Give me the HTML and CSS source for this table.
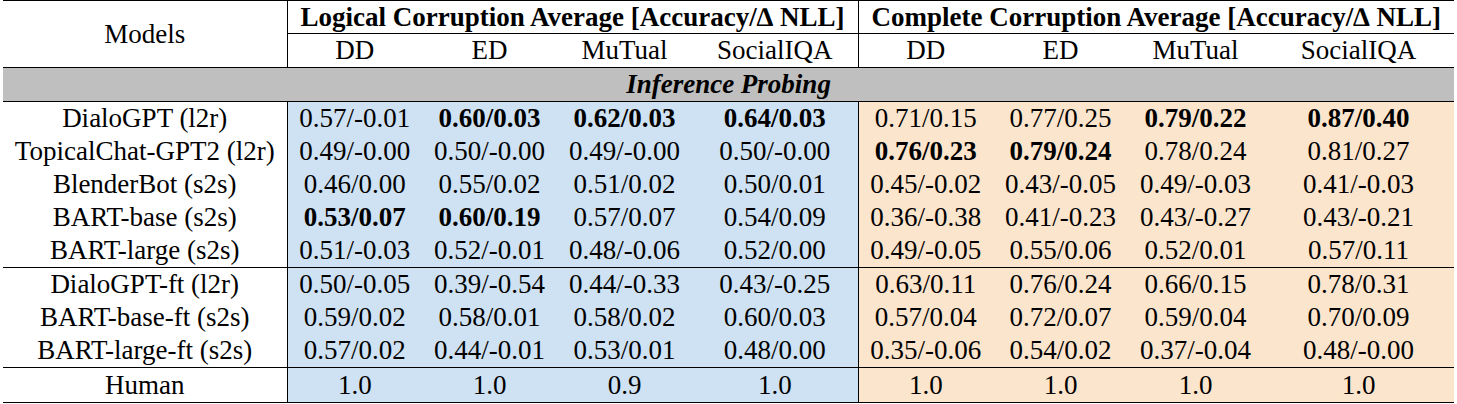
FILE: index.html
```html
<!DOCTYPE html>
<html>
<head>
<meta charset="utf-8">
<link rel="stylesheet" href="styles.css">
</head>
<body>
<table class="results">
  <colgroup>
    <col class="c-model">
    <col class="c-num"><col class="c-num"><col class="c-num"><col class="c-last-l">
    <col class="c-num"><col class="c-num"><col class="c-num"><col class="c-last-c">
  </colgroup>
  <thead>
    <tr class="hrow1">
      <th rowspan="2" class="model-head">Models</th>
      <th colspan="4" class="group sep">Logical Corruption Average [Accuracy/&#8710; NLL]</th>
      <th colspan="4" class="group">Complete Corruption Average [Accuracy/&#8710; NLL]</th>
    </tr>
    <tr class="hrow2">
      <th class="sub">DD</th><th class="sub">ED</th><th class="sub">MuTual</th><th class="sub sep">SocialIQA</th>
      <th class="sub">DD</th><th class="sub">ED</th><th class="sub">MuTual</th><th class="sub">SocialIQA</th>
    </tr>
  </thead>
  <tbody>
    <tr class="band"><td colspan="9">Inference Probing</td></tr>

    <tr class="row">
      <td class="model">DialoGPT (l2r)</td>
      <td class="l">0.57/-0.01</td><td class="l b">0.60/0.03</td><td class="l b">0.62/0.03</td><td class="l sep b">0.64/0.03</td>
      <td class="c">0.71/0.15</td><td class="c">0.77/0.25</td><td class="c b">0.79/0.22</td><td class="c b">0.87/0.40</td>
    </tr>
    <tr class="row">
      <td class="model">TopicalChat-GPT2 (l2r)</td>
      <td class="l">0.49/-0.00</td><td class="l">0.50/-0.00</td><td class="l">0.49/-0.00</td><td class="l sep">0.50/-0.00</td>
      <td class="c b">0.76/0.23</td><td class="c b">0.79/0.24</td><td class="c">0.78/0.24</td><td class="c">0.81/0.27</td>
    </tr>
    <tr class="row">
      <td class="model">BlenderBot (s2s)</td>
      <td class="l">0.46/0.00</td><td class="l">0.55/0.02</td><td class="l">0.51/0.02</td><td class="l sep">0.50/0.01</td>
      <td class="c">0.45/-0.02</td><td class="c">0.43/-0.05</td><td class="c">0.49/-0.03</td><td class="c">0.41/-0.03</td>
    </tr>
    <tr class="row">
      <td class="model">BART-base (s2s)</td>
      <td class="l b">0.53/0.07</td><td class="l b">0.60/0.19</td><td class="l">0.57/0.07</td><td class="l sep">0.54/0.09</td>
      <td class="c">0.36/-0.38</td><td class="c">0.41/-0.23</td><td class="c">0.43/-0.27</td><td class="c">0.43/-0.21</td>
    </tr>
    <tr class="row last">
      <td class="model">BART-large (s2s)</td>
      <td class="l">0.51/-0.03</td><td class="l">0.52/-0.01</td><td class="l">0.48/-0.06</td><td class="l sep">0.52/0.00</td>
      <td class="c">0.49/-0.05</td><td class="c">0.55/0.06</td><td class="c">0.52/0.01</td><td class="c">0.57/0.11</td>
    </tr>

    <tr class="row">
      <td class="model">DialoGPT-ft (l2r)</td>
      <td class="l">0.50/-0.05</td><td class="l">0.39/-0.54</td><td class="l">0.44/-0.33</td><td class="l sep">0.43/-0.25</td>
      <td class="c">0.63/0.11</td><td class="c">0.76/0.24</td><td class="c">0.66/0.15</td><td class="c">0.78/0.31</td>
    </tr>
    <tr class="row">
      <td class="model">BART-base-ft (s2s)</td>
      <td class="l">0.59/0.02</td><td class="l">0.58/0.01</td><td class="l">0.58/0.02</td><td class="l sep">0.60/0.03</td>
      <td class="c">0.57/0.04</td><td class="c">0.72/0.07</td><td class="c">0.59/0.04</td><td class="c">0.70/0.09</td>
    </tr>
    <tr class="row last">
      <td class="model">BART-large-ft (s2s)</td>
      <td class="l">0.57/0.02</td><td class="l">0.44/-0.01</td><td class="l">0.53/0.01</td><td class="l sep">0.48/0.00</td>
      <td class="c">0.35/-0.06</td><td class="c">0.54/0.02</td><td class="c">0.37/-0.04</td><td class="c">0.48/-0.00</td>
    </tr>

    <tr class="row human">
      <td class="model">Human</td>
      <td class="l">1.0</td><td class="l">1.0</td><td class="l">0.9</td><td class="l sep">1.0</td>
      <td class="c">1.0</td><td class="c">1.0</td><td class="c">1.0</td><td class="c">1.0</td>
    </tr>
  </tbody>
</table>
</body>
</html>
```

FILE: styles.css
```css
html, body {
  margin: 0;
  padding: 0;
  background: #ffffff;
}

.results {
  margin: 0 0 0 3px;
  width: 1451px;
  table-layout: fixed;
  border-collapse: collapse;
  font-family: "Liberation Serif", "Times New Roman", serif;
  font-size: 27px;
  color: #000;
  border-top: 1px solid #000;
  border-bottom: 1px solid #000;
}

.c-model { width: 284px; }
.c-num { width: 135px; }
.c-last-l { width: 166px; }
.c-last-c { width: 191px; }

.results th,
.results td {
  padding: 0;
  text-align: center;
  vertical-align: middle;
  white-space: nowrap;
  line-height: 1;
}

.results th {
  font-weight: normal;
}

.model-head {
  border-right: 1px solid #000;
  border-bottom: 1px solid #000;
}

.hrow1 th { height: 32px; }
.hrow2 th { height: 33px; }

.group {
  font-weight: bold !important;
  border-bottom: 1px solid #000;
}

.sub {
  border-bottom: 1px solid #000;
}

.sep {
  border-right: 1px solid #000;
}

.band td {
  height: 33px;
  background: #bfbfbf;
  font-weight: bold;
  font-style: italic;
  border-bottom: 1px solid #000;
}

.row td { height: 33px; }
.row.last td { border-bottom: 1px solid #000; }
.human td { height: 34px; }

.model {
  border-right: 1px solid #000;
  background: #ffffff;
}

.l { background: #cfe2f3; }
.c { background: #fce5cd; }
.b { font-weight: bold; }
```
